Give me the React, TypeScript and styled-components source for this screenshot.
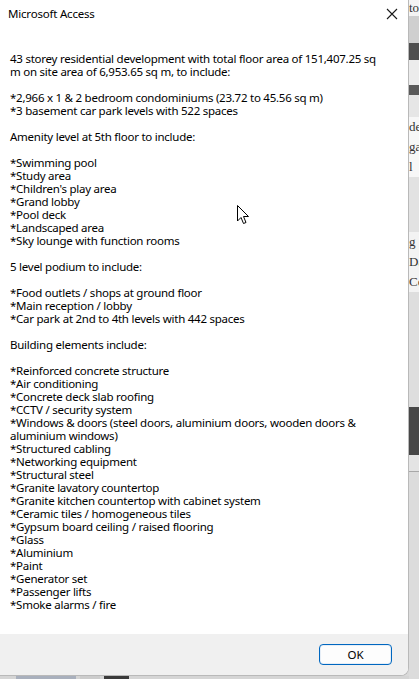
import React from "react";
import styled, { createGlobalStyle } from "styled-components";

const Global = createGlobalStyle`
  html, body { margin: 0; padding: 0; background: #dcdcdc; }
  body { width: 419px; height: 679px; overflow: hidden; }
  #root { width: 419px; height: 679px; }
`;

const Page = styled.div`
  position: relative;
  width: 419px;
  height: 679px;
  display: grid;
  grid-template-columns: 409px 10px;
  grid-template-rows: 676px 3px;
  background: #d9d9d9;
`;

const Dialog = styled.div`
  grid-row: 1;
  grid-column: 1;
  display: flex;
  flex-direction: column;
  background: #ffffff;
  border-right: 1px solid #b9b9b9;
  border-bottom: 1px solid #b9b9b9;
  border-bottom-right-radius: 8px;
  overflow: hidden;
  box-sizing: border-box;
  font-family: "Noto Sans", "Open Sans", sans-serif;
  color: #000;
`;

const TitleBar = styled.div`
  height: 29px;
  display: flex;
  align-items: center;
  justify-content: space-between;
  padding: 0 9px 0 8px;
  flex-shrink: 0;
`;

const Title = styled.span`
  font-size: 11.5px;
  letter-spacing: -0.2px;
  line-height: 14px;
  margin-top: -1px;
`;

const CloseButton = styled.button`
  width: 14px;
  height: 14px;
  padding: 0;
  border: none;
  background: transparent;
  display: flex;
  align-items: center;
  justify-content: center;
  margin-top: -1px;
`;

const Body = styled.div`
  flex: 1;
  padding: 23px 10px 0 10px;
  font-size: 11.5px;
  line-height: 13px;
  letter-spacing: -0.25px;
`;

const Line = styled.div`
  height: 13px;
  white-space: pre;
`;

const Footer = styled.div`
  height: 41px;
  flex-shrink: 0;
  background: #f0f0f0;
  display: flex;
  justify-content: flex-end;
  align-items: flex-start;
  padding: 10px 16px 0 0;
  box-sizing: border-box;
`;

const OkButton = styled.button`
  width: 73px;
  height: 21px;
  box-sizing: border-box;
  background: #fdfdfd;
  border: 1px solid #0067c0;
  border-radius: 4px;
  font-family: "Noto Sans", "Open Sans", sans-serif;
  font-size: 11.5px;
  color: #000;
  padding: 0;
  box-shadow: inset 0 0 0 1px #e6eef7;
`;

const Backdrop = styled.div`
  grid-row: 1 / span 2;
  grid-column: 2;
  display: flex;
  flex-direction: column;
  overflow: hidden;
  font-family: "Liberation Serif", serif;
  font-size: 13px;
  color: #333;
`;

const Band = styled.div<{ $h: number; $bg: string }>`
  height: ${(p) => p.$h}px;
  flex-shrink: 0;
  background: ${(p) => p.$bg};
  line-height: ${(p) => p.$h}px;
  white-space: nowrap;
  overflow: hidden;
`;

const BottomStrip = styled.div`
  grid-row: 2;
  grid-column: 1;
  background: #d5d5d5;
  display: flex;
  gap: 4px;
  padding-left: 16px;
`;

const Tick = styled.div<{ $w: number; $bg: string }>`
  width: ${(p) => p.$w}px;
  height: 3px;
  background: ${(p) => p.$bg};
`;

const Cursor = styled.svg`
  position: absolute;
  left: 237px;
  top: 205px;
`;

const lines: string[] = [
  "43 storey residential development with total floor area of 151,407.25 sq",
  "m on site area of 6,953.65 sq m, to include:",
  "",
  "*2,966 x 1 & 2 bedroom condominiums (23.72 to 45.56 sq m)",
  "*3 basement car park levels with 522 spaces",
  "",
  "Amenity level at 5th floor to include:",
  "",
  "*Swimming pool",
  "*Study area",
  "*Children's play area",
  "*Grand lobby",
  "*Pool deck",
  "*Landscaped area",
  "*Sky lounge with function rooms",
  "",
  "5 level podium to include:",
  "",
  "*Food outlets / shops at ground floor",
  "*Main reception / lobby",
  "*Car park at 2nd to 4th levels with 442 spaces",
  "",
  "Building elements include:",
  "",
  "*Reinforced concrete structure",
  "*Air conditioning",
  "*Concrete deck slab roofing",
  "*CCTV / security system",
  "*Windows & doors (steel doors, aluminium doors, wooden doors &",
  "aluminium windows)",
  "*Structured cabling",
  "*Networking equipment",
  "*Structural steel",
  "*Granite lavatory countertop",
  "*Granite kitchen countertop with cabinet system",
  "*Ceramic tiles / homogeneous tiles",
  "*Gypsum board ceiling / raised flooring",
  "*Glass",
  "*Aluminium",
  "*Paint",
  "*Generator set",
  "*Passenger lifts",
  "*Smoke alarms / fire",
];

const bands: { h: number; bg: string; t?: string }[] = [
  { h: 16, bg: "#f4f4f4", t: "to" },
  { h: 27, bg: "#cfcfcf" },
  { h: 17, bg: "#4e4e4e" },
  { h: 25, bg: "#ececec" },
  { h: 10, bg: "#5a5a5a" },
  { h: 22, bg: "#e6e6e6" },
  { h: 20, bg: "#f7f7f7", t: "de" },
  { h: 20, bg: "#f7f7f7", t: "ga" },
  { h: 20, bg: "#f7f7f7", t: "l" },
  { h: 55, bg: "#e2e2e2" },
  { h: 20, bg: "#f3f3f3", t: "g" },
  { h: 20, bg: "#f3f3f3", t: "Da" },
  { h: 20, bg: "#f3f3f3", t: "Co" },
  { h: 115, bg: "#dedede" },
  { h: 48, bg: "#474747" },
  { h: 16, bg: "#e4e4e4" },
  { h: 1, bg: "#a8a8a8" },
  { h: 207, bg: "#dcdcdc" },
];

export default function App() {
  return (
    <>
      <Global />
      <Page>
        <Dialog>
          <TitleBar>
            <Title>Microsoft Access</Title>
            <CloseButton aria-label="Close">
              <svg width="12" height="12" viewBox="0 0 12 12">
                <path d="M1 1 L11 11 M11 1 L1 11" stroke="#1a1a1a" strokeWidth="1.1" fill="none" />
              </svg>
            </CloseButton>
          </TitleBar>
          <Body>
            {lines.map((l, i) => (
              <Line key={i}>{l}</Line>
            ))}
          </Body>
          <Footer>
            <OkButton>OK</OkButton>
          </Footer>
        </Dialog>
        <Backdrop>
          {bands.map((b, i) => (
            <Band key={i} $h={b.h} $bg={b.bg}>
              {b.t}
            </Band>
          ))}
        </Backdrop>
        <BottomStrip>
          <Tick $w={60} $bg="#a9b0bd" />
          <Tick $w={20} $bg="#cccccc" />
          <Tick $w={25} $bg="#3a3a3a" />
        </BottomStrip>
        <Cursor width="13" height="20" viewBox="0 0 13 20">
          <path
            d="M0.5 0.5 L0.5 16 L4 12.5 L6.5 18.5 L9 17.5 L6.5 11.5 L11.5 11.5 Z"
            fill="#ffffff"
            stroke="#000"
            strokeWidth="1"
          />
        </Cursor>
      </Page>
    </>
  );
}
